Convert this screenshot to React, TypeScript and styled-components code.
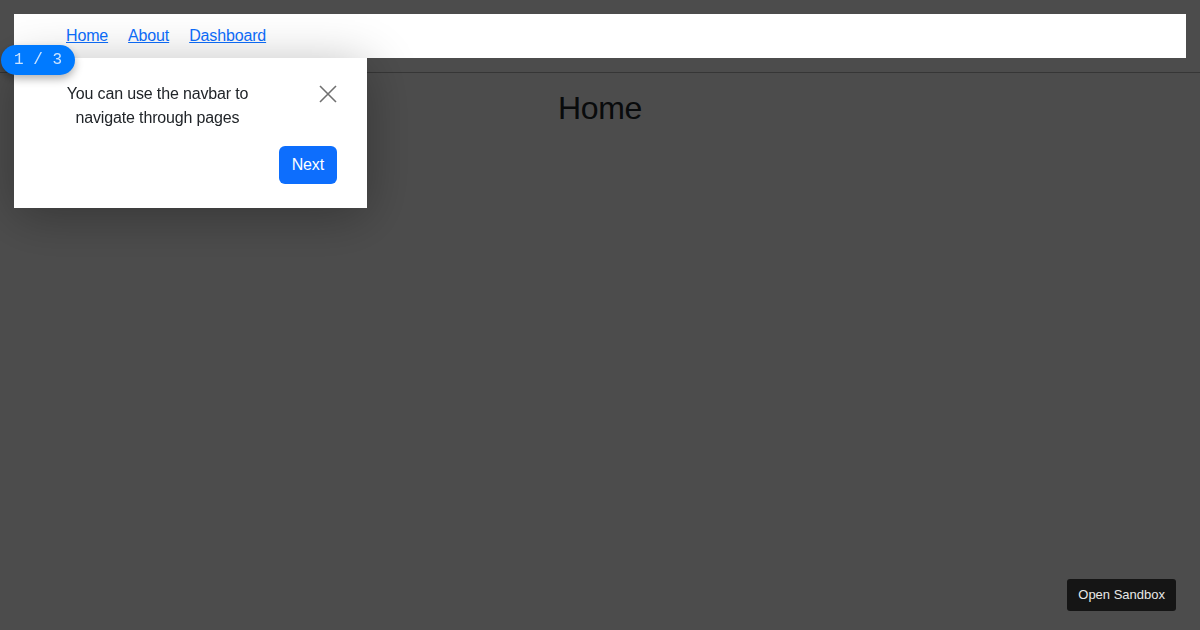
import { createGlobalStyle } from "styled-components";
import styled from "styled-components";

const GlobalStyle = createGlobalStyle`
  html, body {
    margin: 0;
    background: #ffffff;
    color: #212529;
    font-family: "Liberation Sans", Arial, sans-serif;
    font-size: 16px;
    line-height: 1.5;
    letter-spacing: -0.15px;
  }
`;

const Nav = styled.nav`
  padding: 24px;
  border-bottom: 1px solid #b4b4b4;
`;

const NavList = styled.ul`
  display: flex;
  gap: 20px;
  margin: 0;
  padding: 0 0 0 42px;
  list-style: none;
`;

const NavLink = styled.a`
  color: #0d6efd;
  text-decoration: underline;
`;

const Title = styled.h1`
  margin: 16px 0 0;
  text-align: center;
  font-size: 32px;
  font-weight: 400;
  line-height: 1.2;
  letter-spacing: -0.4px;
  color: #212529;
`;

// dark mask with a hole cut around the navbar
const Highlight = styled.div`
  position: fixed;
  left: 14px;
  top: 14px;
  width: 1172px;
  height: 44px;
  box-shadow: 0 0 0 3000px rgba(0, 0, 0, 0.7);
  pointer-events: none;
`;

const Popover = styled.div`
  position: fixed;
  left: 14px;
  top: 58px;
  width: 353px;
  box-sizing: border-box;
  padding: 24px 30px;
  background: #fff;
  box-shadow: 0 0.5em 3em rgba(0, 0, 0, 0.3);
`;

const Badge = styled.span`
  position: absolute;
  left: -13px;
  top: -13px;
  height: 30px;
  padding: 0 13px;
  border-radius: 15px;
  background: #007aff;
  color: rgba(255, 255, 255, 0.8);
  font-family: "Liberation Mono", monospace;
  font-size: 16px;
  letter-spacing: 0;
  line-height: 30px;
  white-space: pre;
  box-shadow: 0 0.25rem 0.5rem rgba(0, 0, 0, 0.3);
`;

const Head = styled.div`
  display: flex;
  justify-content: space-between;
  align-items: flex-start;
`;

const Message = styled.p`
  width: 227px;
  margin: 0;
  text-align: center;
  line-height: 24px;
  color: #212529;
`;

const Close = styled.button`
  display: flex;
  margin: 3px 0 0;
  padding: 0;
  border: 0;
  background: none;
  cursor: pointer;
`;

const Footer = styled.div`
  display: flex;
  justify-content: flex-end;
  margin-top: 16px;
`;

const NextButton = styled.button`
  padding: 6px 13px;
  border: 0;
  border-radius: 6px;
  background: #0d6efd;
  color: #fff;
  font-family: inherit;
  font-size: 16px;
  letter-spacing: inherit;
  line-height: 26px;
  cursor: pointer;
`;

const SandboxButton = styled.a`
  position: fixed;
  right: 24px;
  bottom: 19px;
  padding: 0 11px;
  height: 32px;
  display: flex;
  align-items: center;
  border-radius: 3px;
  background: #151515;
  color: #e8e8e8;
  font-size: 13px;
  letter-spacing: 0;
  text-decoration: none;
`;

export default function App() {
  return (
    <>
      <GlobalStyle />
      <Nav>
        <NavList>
          <li><NavLink href="#">Home</NavLink></li>
          <li><NavLink href="#">About</NavLink></li>
          <li><NavLink href="#">Dashboard</NavLink></li>
        </NavList>
      </Nav>
      <Title>Home</Title>

      <Highlight />
      <Popover>
        <Badge>1 / 3</Badge>
        <Head>
          <Message>You can use the navbar to navigate through pages</Message>
          <Close aria-label="Close">
            <svg width="18" height="18" viewBox="0 0 18 18">
              <path d="M1 1 L17 17 M17 1 L1 17" stroke="#707070" strokeWidth="1.6" fill="none" />
            </svg>
          </Close>
        </Head>
        <Footer>
          <NextButton>Next</NextButton>
        </Footer>
      </Popover>

      <SandboxButton href="#">Open Sandbox</SandboxButton>
    </>
  );
}
